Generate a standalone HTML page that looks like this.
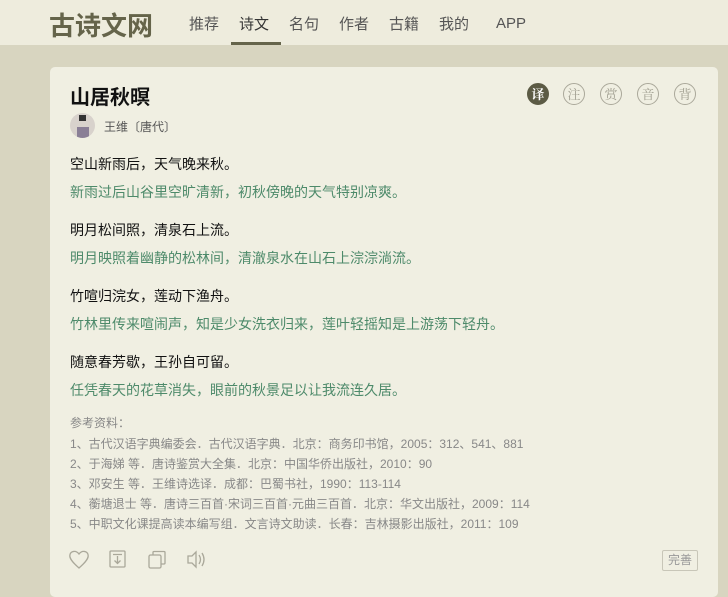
<!DOCTYPE html>
<html><head><meta charset="utf-8"><style>
*{margin:0;padding:0;box-sizing:border-box}
body{width:728px;height:582px;overflow:hidden;background:#d8d5c0;font-family:"Liberation Sans","Noto Sans CJK SC",sans-serif;position:relative}
.top{position:absolute;left:0;top:0;width:728px;height:45px;background:#eeecdd}
.logo{position:absolute;left:49px;top:6px;font-size:26px;font-weight:bold;color:#65644a;letter-spacing:0px}
.nav{position:absolute;top:13px;font-size:15px;color:#555}
.ul{position:absolute;left:231px;top:42px;width:50px;height:3px;background:#65644a}
.card{position:absolute;left:50px;top:67px;width:668px;height:530px;background:#f0efe2;border-radius:5px}
.a{position:absolute;font-size:14px;white-space:nowrap}
.p{color:#111}
.t{color:#4d8a6a}
.r{position:absolute;left:70px;font-size:12px;color:#888;white-space:nowrap}
.c{position:absolute;top:83px;width:22px;height:22px;border:1px solid #aaa89a;border-radius:50%;font-family:"Noto Serif CJK SC",serif;font-size:13px;color:#a09e90;text-align:center;line-height:20px}
</style></head><body>
<div class="top"></div>
<div class="logo">古诗文网</div>
<div class="nav" style="left:189px">推荐</div>
<div class="nav" style="left:239px;color:#333">诗文</div>
<div class="nav" style="left:289px">名句</div>
<div class="nav" style="left:339px">作者</div>
<div class="nav" style="left:389px">古籍</div>
<div class="nav" style="left:439px">我的</div>
<div class="nav" style="left:496px;top:15px">APP</div>
<div class="ul"></div>
<div class="card"></div>
<div class="a" style="left:70px;top:81px;font-size:20px;font-weight:bold;color:#111">山居秋暝</div>
<div style="position:absolute;left:70px;top:113px;width:25px;height:25px;border-radius:50%;background:#d8d2cc;overflow:hidden"><div style="position:absolute;left:9px;top:2px;width:7px;height:6px;background:#333"></div><div style="position:absolute;left:7px;top:14px;width:12px;height:11px;background:#8a7f96"></div></div>
<div class="a" style="left:104px;top:118px;font-size:12px;color:#555">王维〔唐代〕</div>
<div class="c" style="left:527px;background:#5c5b45;border-color:#5c5b45;color:#fff;font-weight:bold">译</div>
<div class="c" style="left:563px">注</div>
<div class="c" style="left:600px">赏</div>
<div class="c" style="left:637px">音</div>
<div class="c" style="left:674px">背</div>
<div class="a p" style="left:70px;top:154px">空山新雨后，天气晚来秋。</div>
<div class="a t" style="left:70px;top:182px">新雨过后山谷里空旷清新，初秋傍晚的天气特别凉爽。</div>
<div class="a p" style="left:70px;top:220px">明月松间照，清泉石上流。</div>
<div class="a t" style="left:70px;top:248px">明月映照着幽静的松林间，清澈泉水在山石上淙淙淌流。</div>
<div class="a p" style="left:70px;top:286px">竹喧归浣女，莲动下渔舟。</div>
<div class="a t" style="left:70px;top:314px">竹林里传来喧闹声，知是少女洗衣归来，莲叶轻摇知是上游荡下轻舟。</div>
<div class="a p" style="left:70px;top:352px">随意春芳歇，王孙自可留。</div>
<div class="a t" style="left:70px;top:380px">任凭春天的花草消失，眼前的秋景足以让我流连久居。</div>
<div class="r" style="top:414px">参考资料：</div>
<div class="r" style="top:435px">1、古代汉语字典编委会．古代汉语字典．北京：商务印书馆，2005：312、541、881</div>
<div class="r" style="top:455px">2、于海娣 等．唐诗鉴赏大全集．北京：中国华侨出版社，2010：90</div>
<div class="r" style="top:475px">3、邓安生 等．王维诗选译．成都：巴蜀书社，1990：113-114</div>
<div class="r" style="top:495px">4、蘅塘退士 等．唐诗三百首·宋词三百首·元曲三百首．北京：华文出版社，2009：114</div>
<div class="r" style="top:515px">5、中职文化课提高读本编写组．文言诗文助读．长春：吉林摄影出版社，2011：109</div>
<svg style="position:absolute;left:68px;top:548px" width="150" height="24" fill="none" stroke="#aaa89a" stroke-width="1.3">
<path d="M11 20 C4 14 1 10 2 6.5 C3 3 8 2 11 6 C14 2 19 3 20 6.5 C21 10 18 14 11 20Z"/>
<rect x="42" y="3" width="15" height="16" rx="1"/><path d="M45 6.5H54M49.5 8V15M46.5 12.5L49.5 15.5L52.5 12.5"/>
<rect x="81" y="7" width="12" height="13" rx="1.5"/><path d="M85 7V4.5Q85 3.5 86 3.5H96Q97 3.5 97 4.5V15Q97 16 96 16H93"/>
<path d="M120 8H124L128 4V19L124 15H120Z"/><path d="M131 7Q134 11.5 131 16M134 5Q138 11.5 134 18"/>
</svg>
<div style="position:absolute;left:662px;top:550px;width:36px;height:21px;border:1px solid #c8c6b8;border-radius:2px;font-size:12px;color:#999;text-align:center;line-height:19px">完善</div>
</body></html>
